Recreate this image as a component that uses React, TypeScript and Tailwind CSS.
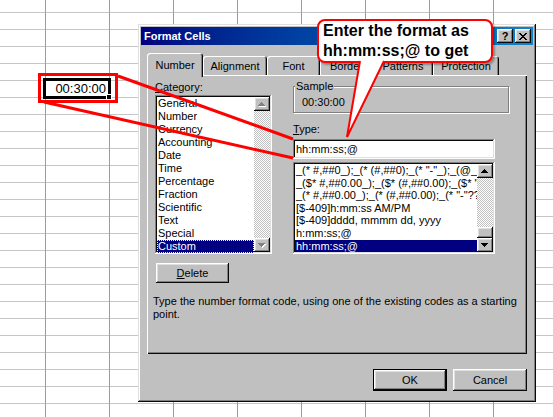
import type { ReactNode } from 'react'

const raised =
  'shadow-[inset_-1px_-1px_#0a0a0a,inset_1px_1px_#ffffff,inset_-2px_-2px_#808080,inset_2px_2px_#dfdfdf]'
const sunken =
  'shadow-[inset_-1px_-1px_#ffffff,inset_1px_1px_#808080,inset_-2px_-2px_#dfdfdf,inset_2px_2px_#0a0a0a]'
const checker =
  'bg-[repeating-conic-gradient(#c0c0c0_0%_25%,#ffffff_0%_50%)] bg-[length:2px_2px]'

const categories = [
  'General',
  'Number',
  'Currency',
  'Accounting',
  'Date',
  'Time',
  'Percentage',
  'Fraction',
  'Scientific',
  'Text',
  'Special',
  'Custom',
]

const typeCodes = [
  '_(* #,##0_);_(* (#,##0);_(* "-"_);_(@_)',
  '_($* #,##0.00_);_($* (#,##0.00);_($* "-"??_);_(@_)',
  '_(* #,##0.00_);_(* (#,##0.00);_(* "-"??_);_(@_)',
  '[$-409]h:mm:ss AM/PM',
  '[$-409]dddd, mmmm dd, yyyy',
  'h:mm:ss;@',
  'hh:mm:ss;@',
]

const tabs = [
  { label: 'Number', w: 'w-[56px]', active: true },
  { label: 'Alignment', w: 'w-[64px]' },
  { label: 'Font', w: 'w-[53px]' },
  { label: 'Border', w: 'w-[53px]' },
  { label: 'Patterns', w: 'w-[60px]' },
  { label: 'Protection', w: 'w-[66px]' },
]

function Arrow({ up, disabled }: { up?: boolean; disabled?: boolean }) {
  const rows = up
    ? [
        [3, 0, 1],
        [2, 1, 3],
        [1, 2, 5],
        [0, 3, 7],
      ]
    : [
        [0, 0, 7],
        [1, 1, 5],
        [2, 2, 3],
        [3, 3, 1],
      ]
  return (
    <svg width="8" height="5" viewBox="0 0 8 5">
      {disabled &&
        rows.map(([x, y, w]) => (
          <rect key={'s' + y} x={x + 1} y={y + 1} width={w} height={1} fill="#ffffff" />
        ))}
      {rows.map(([x, y, w]) => (
        <rect key={y} x={x} y={y} width={w} height={1} fill={disabled ? '#808080' : '#000000'} />
      ))}
    </svg>
  )
}

function ScrollButton({ up, disabled }: { up?: boolean; disabled?: boolean }) {
  return (
    <div className={`flex h-[14px] w-[16px] shrink-0 items-center justify-center bg-[#c0c0c0] ${raised}`}>
      <Arrow up={up} disabled={disabled} />
    </div>
  )
}

function Button({ children, className = '' }: { children: ReactNode; className?: string }) {
  return (
    <div className={`flex items-center justify-center bg-[#c0c0c0] ${raised} ${className}`}>
      {children}
    </div>
  )
}

function CloseGlyph() {
  const px = [
    [0, 0], [1, 0], [6, 0], [7, 0],
    [1, 1], [2, 1], [5, 1], [6, 1],
    [2, 2], [3, 2], [4, 2], [5, 2],
    [3, 3], [4, 3],
    [2, 4], [3, 4], [4, 4], [5, 4],
    [1, 5], [2, 5], [5, 5], [6, 5],
    [0, 6], [1, 6], [6, 6], [7, 6],
  ]
  return (
    <svg width="8" height="7" viewBox="0 0 8 7">
      {px.map(([x, y]) => (
        <rect key={`${x}-${y}`} x={x} y={y} width={1} height={1} fill="#000000" />
      ))}
    </svg>
  )
}

export default function App() {
  return (
    <div className="relative h-[417px] w-[553px] overflow-hidden bg-white bg-[linear-gradient(to_right,#9c9c9c_1px,transparent_1px),linear-gradient(to_bottom,#c6c6c6_1px,transparent_1px)] bg-[length:64px_17px] bg-[position:45px_12px] font-['Liberation_Sans',Arial,sans-serif] text-[11px] text-black">
      {/* selected cell on the sheet */}
      <div className="absolute left-[38px] top-[73px] h-[30px] w-[80px] border-[3px] border-[#ff0000]" />
      <div className="absolute left-[43px] top-[78px] flex h-[21px] w-[68px] items-center justify-end border-[3px] border-black bg-white pr-[2px] text-[13px]">
        00:30:00
        <div className="absolute -bottom-[4px] -right-[4px] h-[6px] w-[6px] border border-white bg-black" />
      </div>

      {/* Format Cells dialog */}
      <div className="absolute left-[138px] top-[24px] flex h-[378px] w-[398px] flex-col bg-[#c0c0c0] p-[3px] shadow-[inset_-1px_-1px_#0a0a0a,inset_1px_1px_#dfdfdf,inset_-2px_-2px_#808080,inset_2px_2px_#ffffff]">
        <div className="flex h-[18px] items-center justify-between bg-linear-to-r from-[#000080] to-[#1084d0] pl-[3px] pr-[2px]">
          <span className="font-bold text-white">Format Cells</span>
          <div className="flex gap-[2px]">
            <Button className="h-[14px] w-[16px] font-bold leading-[14px]">?</Button>
            <Button className="h-[14px] w-[16px]">
              <CloseGlyph />
            </Button>
          </div>
        </div>

        <div className="px-[6px] pt-[8px]">
          <div className="flex h-[22px] items-start">
            {tabs.map((t) => (
              <div
                key={t.label}
                className={`${t.w} rounded-t-[3px] bg-[#c0c0c0] text-center leading-[13px] shadow-[inset_1px_1px_#ffffff,inset_-1px_0_#0a0a0a,inset_-2px_0_#808080] ${
                  t.active ? 'relative z-10 h-[24px] pt-[6px]' : 'mt-[3px] h-[19px] pt-[4px]'
                }`}
              >
                {t.label}
              </div>
            ))}
          </div>

          <div className="h-[279px] shadow-[inset_1px_1px_#ffffff,inset_-1px_-1px_#0a0a0a,inset_-2px_-2px_#808080]">
            <div className="flex pl-[8px] pt-[6px]">
              {/* category column */}
              <div className="w-[117px]">
                <div className="leading-[13px]">
                  <span className="underline">C</span>ategory:
                </div>
                <div className={`mt-[1px] flex h-[159px] bg-white p-[2px] ${sunken}`}>
                  <div className="flex-1">
                    {categories.map((c) => (
                      <div
                        key={c}
                        className={`h-[13px] pl-[1px] leading-[13px] ${
                          c === 'Custom'
                            ? 'bg-[#000080] text-white outline-1 -outline-offset-1 outline-dotted outline-[#ffff80]'
                            : ''
                        }`}
                      >
                        {c}
                      </div>
                    ))}
                  </div>
                  <div className="flex w-[16px] flex-col">
                    <ScrollButton up disabled />
                    <div className={`flex-1 ${checker}`} />
                    <ScrollButton disabled />
                  </div>
                </div>
                <Button className="ml-[1px] mt-[9px] h-[20px] w-[73px]">
                  <span>
                    <span className="underline">D</span>elete
                  </span>
                </Button>
              </div>

              {/* sample / type column */}
              <div className="ml-[21px] w-[216px]">
                <div className="relative mt-[5px] h-[27px] border border-[#808080] pl-[8px] pt-[9px] leading-[13px] shadow-[inset_1px_1px_#ffffff,1px_1px_#ffffff]">
                  <span className="absolute -top-[7px] left-[1px] bg-[#c0c0c0] px-[1px] leading-[13px]">Sample</span>
                  00:30:00
                </div>
                <div className="mt-[10px] leading-[13px]">
                  <span className="underline">T</span>ype:
                </div>
                <div className={`mt-[3px] h-[20px] w-[202px] bg-white pl-[3px] leading-[20px] ${sunken}`}>
                  hh:mm:ss;@
                </div>
                <div className={`mt-[3px] flex h-[92px] w-[202px] bg-white p-[2px] ${sunken}`}>
                  <div className="min-w-0 flex-1 overflow-hidden">
                    {typeCodes.map((c) => (
                      <div
                        key={c}
                        className={`h-[12.6px] whitespace-pre pl-[1px] leading-[12.6px] ${
                          c === 'hh:mm:ss;@' ? 'bg-[#000080] text-white' : ''
                        }`}
                      >
                        {c}
                      </div>
                    ))}
                  </div>
                  <div className="flex w-[16px] flex-col">
                    <ScrollButton up />
                    <div className={`flex flex-1 flex-col justify-end ${checker}`}>
                      <div className={`h-[11px] bg-[#c0c0c0] ${raised}`} />
                    </div>
                    <ScrollButton />
                  </div>
                </div>
              </div>
            </div>

            <p className="ml-[6px] mt-[12px] w-[368px] leading-[13px]">
              Type the number format code, using one of the existing codes as a starting point.
            </p>
          </div>
        </div>

        <div className="mt-[15px] flex justify-end gap-[6px] pr-[6px]">
          <div className="h-[22px] w-[74px] border border-black">
            <Button className="h-full w-full">OK</Button>
          </div>
          <Button className="h-[22px] w-[74px]">Cancel</Button>
        </div>
      </div>

      {/* red pointer lines */}
      <svg className="pointer-events-none absolute left-0 top-0" width="553" height="417">
        <line x1="118" y1="76" x2="293" y2="139" stroke="#ff0000" strokeWidth="3" />
        <line x1="44" y1="102" x2="293" y2="158" stroke="#ff0000" strokeWidth="3" />
      </svg>

      {/* callout */}
      <div className="absolute left-[317px] top-[19px] h-[44px] w-[176px] rounded-[8px] border-2 border-[#ff0000] bg-white pl-[4px] text-[16px] font-bold leading-[20px] shadow-[2px_2px_2px_rgba(0,0,0,0.3)]">
        <div>Enter the format as</div>
        <div>hh:mm:ss;@ to get</div>
      </div>
      <svg className="pointer-events-none absolute left-0 top-0" width="553" height="417">
        <polygon points="360,60 384,60 347,137" fill="#ffffff" />
        <line x1="360" y1="61" x2="347" y2="137" stroke="#ff0000" strokeWidth="2" />
        <line x1="384" y1="61" x2="347" y2="137" stroke="#ff0000" strokeWidth="2" />
      </svg>
    </div>
  )
}
